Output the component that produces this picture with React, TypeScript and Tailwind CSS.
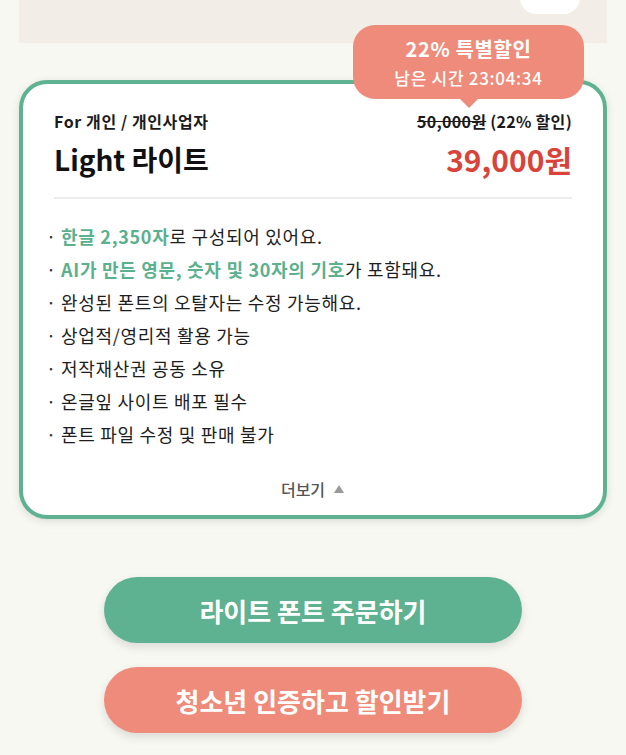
import React from 'react';

const features: { green?: string; rest: string }[] = [
  { green: '한글 2,350자', rest: '로 구성되어 있어요.' },
  { green: 'AI가 만든 영문, 숫자 및 30자의 기호', rest: '가 포함돼요.' },
  { rest: '완성된 폰트의 오탈자는 수정 가능해요.' },
  { rest: '상업적/영리적 활용 가능' },
  { rest: '저작재산권 공동 소유' },
  { rest: '온글잎 사이트 배포 필수' },
  { rest: '폰트 파일 수정 및 판매 불가' },
];

export default function App() {
  return (
    <div
      className="min-h-[755px] w-[626px] bg-[#f8f8f3] overflow-hidden"
      style={{ fontFamily: '"Noto Sans CJK KR", "Noto Sans", sans-serif' }}
    >
      {/* top block */}
      <div className="mx-[19px] h-[43px] bg-[#f2ede6] relative">
        <div className="absolute right-[27px] top-[-20px] w-[60px] h-[34px] rounded-[16px] bg-white" />
      </div>

      {/* plan card */}
      <div className="relative mx-[19px] mt-[37px]">
        <div className="absolute right-[23px] top-[-55px] z-10 flex flex-col items-center">
          <div className="w-[231px] h-[74px] rounded-[22px] bg-[#ef8b7a] flex flex-col items-center justify-center text-white leading-none">
            <span className="text-[20px] font-bold tracking-[0.6px]">22% 특별할인</span>
            <span className="text-[17px] font-medium tracking-[0.7px] mt-[10px]">남은 시간 23:04:34</span>
          </div>
          <div className="w-0 h-0 border-l-[9px] border-r-[9px] border-t-[9px] border-l-transparent border-r-transparent border-t-[#ef8b7a]" />
        </div>

        <div className="rounded-[28px] border-4 border-[#5fb291] bg-white shadow-[0_2px_8px_rgba(0,0,0,0.12)] px-[31px] pt-[26px] pb-[14px]">
          <div className="flex justify-between items-start">
            <div className="flex flex-col">
              <span className="text-[16px] font-semibold tracking-[0.6px] text-[#1b1b1b] leading-[22px]">For 개인 / 개인사업자</span>
              <span className="text-[28px] font-bold text-[#111] leading-[40px] mt-[7px]">Light 라이트</span>
            </div>
            <div className="flex flex-col items-end">
              <span className="text-[16px] font-semibold tracking-[0.3px] text-[#1b1b1b] leading-[22px]">
                <span className="line-through">50,000원</span> (22% 할인)
              </span>
              <span className="text-[30px] font-bold text-[#d8443a] leading-[40px] mt-[7px]">39,000원</span>
            </div>
          </div>

          <div className="h-[2px] bg-[#ececec] mt-[18px]" />

          <ul className="mt-[21px] flex flex-col">
            {features.map((f, i) => (
              <li key={i} className="flex items-center h-[33px] text-[18px] tracking-[0.7px] text-[#1e1e1e] -ml-[8px]">
                <span className="w-[15px] text-[#333]">·</span>
                <span>
                  {f.green && <span className="text-[#5bb08e] font-semibold">{f.green}</span>}
                  {f.rest}
                </span>
              </li>
            ))}
          </ul>

          <div className="flex items-center justify-center gap-[8px] mt-[26px] text-[16px] font-medium text-[#555]">
            <span>더보기</span>
            <svg width="12" height="10" viewBox="0 0 12 10">
              <path d="M6 1 L11 9 L1 9 Z" fill="#999" />
            </svg>
          </div>
        </div>
      </div>

      {/* buttons */}
      <div className="flex flex-col items-center gap-[24px] mt-[58px] pb-[20px]">
        <button className="w-[418px] h-[66px] rounded-full bg-[#5eb291] text-white text-[26px] font-bold shadow-[0_4px_10px_rgba(0,0,0,0.12)]">
          라이트 폰트 주문하기
        </button>
        <button className="w-[418px] h-[66px] rounded-full bg-[#ef8b7a] text-white text-[26px] font-bold shadow-[0_4px_10px_rgba(0,0,0,0.12)]">
          청소년 인증하고 할인받기
        </button>
      </div>
    </div>
  );
}
